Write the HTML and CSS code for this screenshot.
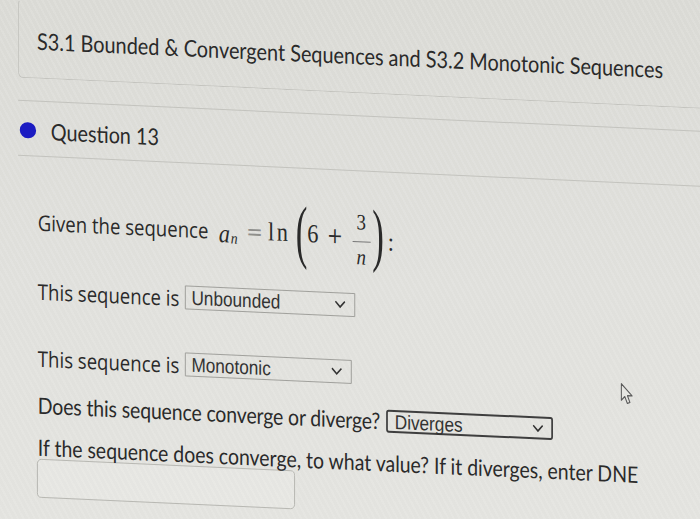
FILE: index.html
```html
<!DOCTYPE html>
<html lang="en">
<head>
<meta charset="utf-8">
<title>Question 13</title>
<link rel="stylesheet" href="styles.css">
</head>
<body>
<div class="page">
  <div class="header">
    <h1 class="title">S3.1 Bounded &amp; Convergent Sequences and S3.2 Monotonic Sequences</h1>
  </div>
  <div class="qhead">
    <span class="dot"></span>
    <h2 class="qtitle">Question 13</h2>
  </div>
  <div class="qbody">
    <div class="row given">
      <span class="label">Given the sequence</span>
      <span class="math">
        <span class="mi">a</span><span class="sub">n</span>
        <span class="eq">=</span>
        <span class="fn">ln</span>
        <span class="paren lp">(</span>
        <span class="num6">6</span>
        <span class="plus">+</span>
        <span class="frac"><span class="fnum">3</span><span class="fden">n</span></span>
        <span class="paren rp">)</span>
        <span class="colon">:</span>
      </span>
    </div>
    <div class="row r1">
      <span class="label">This sequence is</span>
      <div class="select">
        <span class="sel-text">Unbounded</span>
        <svg class="chev" width="13" height="8" viewBox="0 0 13 8"><polyline points="1,1 6.5,6.5 12,1" fill="none" stroke="#333" stroke-width="1.7"/></svg>
      </div>
    </div>
    <div class="row r2">
      <span class="label">This sequence is</span>
      <div class="select">
        <span class="sel-text">Monotonic</span>
        <svg class="chev" width="13" height="8" viewBox="0 0 13 8"><polyline points="1,1 6.5,6.5 12,1" fill="none" stroke="#333" stroke-width="1.7"/></svg>
      </div>
    </div>
    <div class="row r3">
      <span class="label2 tight">Does this sequence converge or diverge?</span>
      <div class="select focus">
        <span class="sel-text">Diverges</span>
        <svg class="chev" width="13" height="8" viewBox="0 0 13 8"><polyline points="1,1 6.5,6.5 12,1" fill="none" stroke="#333" stroke-width="1.7"/></svg>
      </div>
    </div>
    <p class="label2 r4">If the sequence does converge, to what value? If it diverges, enter DNE</p>
    <div class="answer"></div>
  </div>
  <svg class="cursor" width="17" height="23" viewBox="0 0 17 23"><path d="M1.5 1.5 L1.5 18 L5.5 14.2 L8.5 21 L11.5 19.8 L8.6 13.2 L14 13.2 Z" fill="#e6e6e2" stroke="#5a5a5a" stroke-width="1.2" stroke-linejoin="round"/></svg>
</div>
</body>
</html>
```
FILE: styles.css
```css
html, body {
  margin: 0;
  height: 100%;
  overflow: hidden;
}
body {
  background-color: #dfdfdb;
  background-image:
    repeating-linear-gradient(62deg, rgba(255,255,255,0.10) 0 2px, rgba(0,0,0,0) 2px 5px),
    linear-gradient(180deg, #dadad5 0%, #e0e0dc 55%, #e3e3df 100%);
}
.page {
  position: relative;
  width: 814px;
  height: 500px;
  overflow: hidden;
  transform-origin: 0 0;
  transform: skewY(2.6deg) scaleX(0.86);
  color: #2a2a2a;
}
.header {
  margin: -3px 0 0 21px;
  height: 80px;
  box-sizing: border-box;
  border: 1px solid #c3c3be;
  border-right: 0;
  border-radius: 6px 0 0 6px;
  display: flex;
  align-items: center;
  padding: 4px 0 0 21px;
}
.title {
  margin: 0;
  font: 400 23.1px "Lato", "DejaVu Sans", sans-serif;
  white-space: nowrap;
}
.qhead {
  margin: 22px 0 0 21px;
  height: 56px;
  box-sizing: border-box;
  border-top: 1px solid #c3c3be;
  border-bottom: 1px solid #c3c3be;
  display: flex;
  align-items: center;
  padding-top: 3px;
}
.dot {
  width: 19px;
  height: 16px;
  border-radius: 50%;
  background: #1c1cc2;
  margin-left: 2px;
}
.qtitle {
  margin: 0 0 0 17px;
  font: 400 23px "Lato", "DejaVu Sans", sans-serif;
}
.qbody {
  padding-left: 44px;
}
.row {
  display: flex;
  align-items: center;
}
.label {
  font: 400 21.6px "Open Sans", "DejaVu Sans", sans-serif;
  white-space: nowrap;
}
.label2 {
  font: 400 22.6px "Lato", "DejaVu Sans", sans-serif;
  white-space: nowrap;
}
.label2.tight {
  letter-spacing: -0.15px;
}
.given {
  margin-top: 33px;
  height: 64px;
}
.math {
  display: flex;
  align-items: center;
  font-family: "Liberation Serif", "DejaVu Serif", serif;
  font-size: 26px;
  margin-left: 12px;
}
.mi, .sub, .fden {
  font-style: italic;
}
.mi {
  margin-top: 8px;
}
.sub {
  font-size: 16px;
  margin-top: 16px;
  margin-left: 1px;
}
.eq {
  font-family: "DejaVu Serif", serif;
  font-size: 23px;
  color: #8f8f8c;
  margin-left: 10px;
}
.fn {
  margin-left: 6px;
  letter-spacing: 3px;
}
.paren {
  font-size: 70px;
  line-height: 1;
  display: inline-block;
  transform: scaleX(0.58);
  margin-bottom: 4px;
}
.lp {
  margin-left: 1px;
  margin-right: -6px;
}
.rp {
  margin-left: -3px;
  margin-right: -3px;
}
.num6 {
  margin-left: 1px;
}
.plus {
  font-family: "DejaVu Serif", serif;
  font-size: 22px;
  margin-left: 10px;
}
.frac {
  display: flex;
  flex-direction: column;
  align-items: stretch;
  text-align: center;
  margin: 6px 0 0 11px;
  font-size: 22px;
}
.fnum, .fden {
  line-height: 26px;
  padding: 0 5px;
}
.fnum {
  padding-bottom: 6px;
  border-bottom: 1px solid #777;
}
.fden {
  padding-top: 2px;
}
.colon {
  margin: 10px 0 0 3px;
}
.r1 {
  margin-top: 25px;
  height: 24px;
}
.r2 {
  margin-top: 43px;
  height: 24px;
}
.r3 {
  margin-top: 24px;
  height: 23px;
}
.select {
  display: flex;
  align-items: center;
  justify-content: space-between;
  box-sizing: border-box;
  height: 24px;
  width: 198px;
  margin-left: 6px;
  padding: 0 10px 0 7px;
  border: 1px solid #9c9c98;
}
.r2 .select {
  width: 194px;
}
.select.focus {
  height: 23px;
  width: 194px;
  margin-left: 7px;
  padding: 0 9px 0 8px;
  border: 2px solid #3e3e3e;
  border-radius: 3px;
}
.sel-text {
  font: 400 20px "Liberation Sans", Arial, sans-serif;
  color: #333;
  line-height: 1;
}
.r4 {
  margin: 20px 0 0 0;
  line-height: 22px;
}
.answer {
  width: 300px;
  height: 39px;
  box-sizing: border-box;
  border: 1.5px solid #b4b4af;
  border-radius: 5px;
  margin-left: -1px;
  background: rgba(255,255,255,0.12);
}
.cursor {
  position: absolute;
  left: 721px;
  top: 354px;
}
```
